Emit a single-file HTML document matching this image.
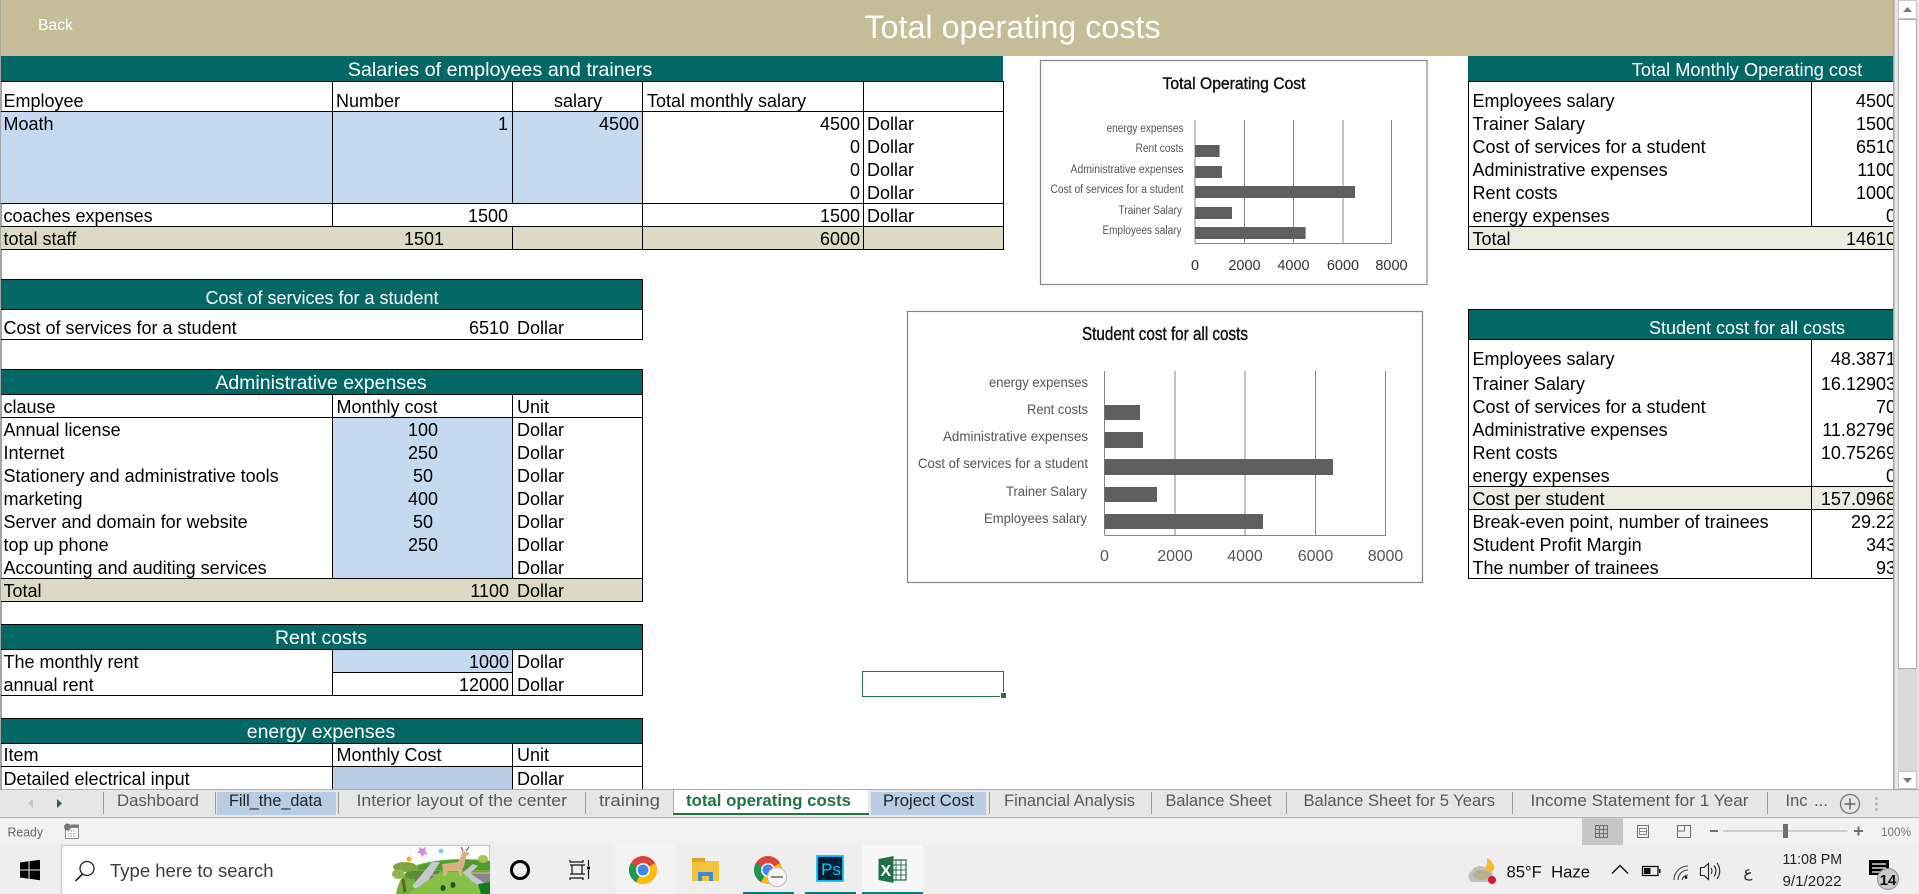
<!DOCTYPE html>
<html lang="en"><head><meta charset="utf-8"><title>Total operating costs</title>
<style>
html,body{margin:0;padding:0;width:1919px;height:894px;overflow:hidden;background:#fff}
body{position:relative;font-family:"Liberation Sans",Arial,sans-serif;color:#000}
#sheet{position:absolute;left:0;top:0;width:1893px;height:789px;overflow:hidden;background:#fff}
#sheet div{position:absolute}
.t{white-space:nowrap;font-size:18px;line-height:23px;height:23px}
.r{text-align:right}
.c{text-align:center;transform:translateX(-50%)}
.band{background:#036765}
.w{color:#fff}
.bl{background:#c5d9f1}
.tan{background:#ddd9c4}
.lt{background:#eeece1}
.h{height:1px;background:#000}
.v{width:1px;background:#000}
svg{position:absolute;left:0;top:0}
text{font-family:"Liberation Sans",Arial,sans-serif}
</style></head><body>
<div id="sheet">
<div style="left:0;top:0;width:1.5px;height:789px;background:#a6a6a6"></div>
<div style="left:1px;top:0;width:1892px;height:56px;background:#c4bd97"></div>
<div class="t w" style="left:38px;top:14px;font-size:15.7px">Back</div>
<div class="t w c" style="left:1012.5px;top:9px;font-size:32.3px;line-height:36px;height:36px">Total operating costs</div>

<!-- Salaries -->
<div class="band" style="left:1px;top:56px;width:1002px;height:25px"></div>
<div class="t w c" style="left:500px;top:59px;font-size:19.8px">Salaries of employees and trainers</div>
<div class="bl" style="left:1px;top:111px;width:641px;height:92px"></div>
<div class="tan" style="left:1px;top:226px;width:1002px;height:23px"></div>
<div class="h" style="left:1px;top:81px;width:1003px"></div>
<div class="h" style="left:1px;top:111px;width:1003px"></div>
<div class="h" style="left:1px;top:203px;width:1003px"></div>
<div class="h" style="left:1px;top:226px;width:1003px"></div>
<div class="h" style="left:1px;top:249px;width:1003px"></div>
<div class="v" style="left:1003px;top:81px;height:169px"></div>
<div class="v" style="left:332px;top:81px;height:145px"></div>
<div class="v" style="left:512px;top:81px;height:122px"></div>
<div class="v" style="left:512px;top:226px;height:23px"></div>
<div class="v" style="left:642px;top:81px;height:168px"></div>
<div class="v" style="left:863px;top:81px;height:168px"></div>
<div class="t" style="left:3.5px;top:90px">Employee</div>
<div class="t" style="left:336px;top:90px">Number</div>
<div class="t" style="left:554px;top:90px">salary</div>
<div class="t" style="left:647px;top:90px">Total monthly salary</div>
<div class="t" style="left:3.5px;top:113px">Moath</div>
<div class="t r" style="left:400px;width:108px;top:113px">1</div>
<div class="t r" style="left:530px;width:109px;top:113px">4500</div>
<div class="t r" style="left:750px;width:110px;top:113px">4500</div><div class="t" style="left:867px;top:113px">Dollar</div>
<div class="t r" style="left:750px;width:110px;top:136px">0</div><div class="t" style="left:867px;top:136px">Dollar</div>
<div class="t r" style="left:750px;width:110px;top:159px">0</div><div class="t" style="left:867px;top:159px">Dollar</div>
<div class="t r" style="left:750px;width:110px;top:182px">0</div><div class="t" style="left:867px;top:182px">Dollar</div>
<div class="t" style="left:3.5px;top:205px">coaches expenses</div>
<div class="t r" style="left:400px;width:108px;top:205px">1500</div>
<div class="t r" style="left:750px;width:110px;top:205px">1500</div><div class="t" style="left:867px;top:205px">Dollar</div>
<div class="t" style="left:3.5px;top:228px">total staff</div>
<div class="t" style="left:404px;top:228px">1501</div>
<div class="t r" style="left:750px;width:110px;top:228px">6000</div>

<!-- Cost of services -->
<div class="band" style="left:1px;top:279px;width:641px;height:30px"></div>
<div class="h" style="left:1px;top:279px;width:642px"></div>
<div class="t w c" style="left:322px;top:287px">Cost of services for a student</div>
<div class="h" style="left:1px;top:309px;width:642px"></div>
<div class="h" style="left:1px;top:339px;width:642px"></div>
<div class="v" style="left:642px;top:279px;height:61px"></div>
<div class="t" style="left:3.5px;top:317px">Cost of services for a student</div>
<div class="t r" style="left:400px;width:109px;top:317px">6510</div>
<div class="t" style="left:517px;top:317px">Dollar</div>

<!-- Administrative -->
<div class="band" style="left:1px;top:369px;width:641px;height:25px"></div>
<div class="h" style="left:1px;top:369px;width:642px"></div>
<div class="t w c" style="left:321px;top:372px;font-size:19.5px">Administrative expenses</div>
<div class="bl" style="left:333px;top:417px;width:179px;height:161px"></div>
<div class="tan" style="left:1px;top:578px;width:641px;height:23px"></div>
<div class="h" style="left:1px;top:394px;width:642px"></div>
<div class="h" style="left:1px;top:417px;width:642px"></div>
<div class="h" style="left:1px;top:578px;width:642px"></div>
<div class="h" style="left:1px;top:601px;width:642px"></div>
<div class="v" style="left:332px;top:394px;height:184px"></div>
<div class="v" style="left:512px;top:394px;height:184px"></div>
<div class="v" style="left:642px;top:369px;height:233px"></div>
<div class="t" style="left:3.5px;top:396px">clause</div><div class="t" style="left:336.5px;top:396px">Monthly cost</div><div class="t" style="left:517px;top:396px">Unit</div>
<div class="t" style="left:3.5px;top:419px">Annual license</div><div class="t c" style="left:423px;top:419px">100</div><div class="t" style="left:517px;top:419px">Dollar</div>
<div class="t" style="left:3.5px;top:442px">Internet</div><div class="t c" style="left:423px;top:442px">250</div><div class="t" style="left:517px;top:442px">Dollar</div>
<div class="t" style="left:3.5px;top:465px">Stationery and administrative tools</div><div class="t c" style="left:423px;top:465px">50</div><div class="t" style="left:517px;top:465px">Dollar</div>
<div class="t" style="left:3.5px;top:488px">marketing</div><div class="t c" style="left:423px;top:488px">400</div><div class="t" style="left:517px;top:488px">Dollar</div>
<div class="t" style="left:3.5px;top:511px">Server and domain for website</div><div class="t c" style="left:423px;top:511px">50</div><div class="t" style="left:517px;top:511px">Dollar</div>
<div class="t" style="left:3.5px;top:534px">top up phone</div><div class="t c" style="left:423px;top:534px">250</div><div class="t" style="left:517px;top:534px">Dollar</div>
<div class="t" style="left:3.5px;top:557px">Accounting and auditing services</div><div class="t" style="left:517px;top:557px">Dollar</div>
<div class="t" style="left:3.5px;top:580px">Total</div><div class="t r" style="left:400px;width:109px;top:580px">1100</div><div class="t" style="left:517px;top:580px">Dollar</div>

<!-- Rent -->
<div class="band" style="left:1px;top:624px;width:641px;height:25px"></div>
<div class="h" style="left:1px;top:624px;width:642px"></div>
<div class="t w c" style="left:321px;top:627px;font-size:19.5px">Rent costs</div>
<div class="bl" style="left:333px;top:649px;width:179px;height:23px"></div>
<div class="h" style="left:1px;top:649px;width:642px"></div>
<div class="h" style="left:332px;top:672px;width:180px"></div>
<div class="h" style="left:1px;top:695px;width:642px"></div>
<div class="v" style="left:332px;top:649px;height:46px"></div>
<div class="v" style="left:512px;top:649px;height:46px"></div>
<div class="v" style="left:642px;top:624px;height:72px"></div>
<div class="t" style="left:3.5px;top:651px">The monthly rent</div><div class="t r" style="left:400px;width:109px;top:651px">1000</div><div class="t" style="left:517px;top:651px">Dollar</div>
<div class="t" style="left:3.5px;top:674px">annual rent</div><div class="t r" style="left:400px;width:109px;top:674px">12000</div><div class="t" style="left:517px;top:674px">Dollar</div>

<!-- Energy -->
<div class="band" style="left:1px;top:718px;width:641px;height:25px"></div>
<div class="h" style="left:1px;top:718px;width:642px"></div>
<div class="t w c" style="left:321px;top:721px;font-size:19.5px">energy expenses</div>
<div class="h" style="left:1px;top:743px;width:642px"></div>
<div style="left:333px;top:767px;width:179px;height:22px;background:#b8cce4"></div>
<div class="h" style="left:1px;top:766px;width:642px"></div>
<div class="v" style="left:332px;top:743px;height:46px"></div>
<div class="v" style="left:512px;top:743px;height:46px"></div>
<div class="v" style="left:642px;top:718px;height:71px"></div>
<div class="t" style="left:3.5px;top:744px">Item</div><div class="t" style="left:336.5px;top:744px">Monthly Cost</div><div class="t" style="left:517px;top:744px">Unit</div>
<div class="t" style="left:3.5px;top:768px">Detailed electrical input</div><div class="t" style="left:517px;top:768px">Dollar</div>

<!-- Selection -->
<div style="left:862px;top:671px;width:140px;height:24px;border:1.5px solid #217346"></div>
<div style="left:1001px;top:693px;width:5px;height:5px;background:#217346;outline:1px solid #fff"></div>

<!-- Right table 1 -->
<div class="band" style="left:1468px;top:56px;width:425px;height:25px"></div>
<div class="t w c" style="left:1747px;top:59px;font-size:18.2px">Total Monthly Operating cost</div>
<div class="lt" style="left:1469px;top:226px;width:424px;height:23px"></div>
<div class="h" style="left:1468px;top:81px;width:425px"></div>
<div class="h" style="left:1468px;top:226px;width:425px"></div>
<div class="h" style="left:1468px;top:249px;width:425px"></div>
<div class="v" style="left:1468px;top:81px;height:169px"></div>
<div class="v" style="left:1811px;top:81px;height:145px"></div>
<div class="t" style="left:1472.5px;top:90px">Employees salary</div><div class="t r" style="left:1790px;width:106px;top:90px">4500</div>
<div class="t" style="left:1472.5px;top:113px">Trainer Salary</div><div class="t r" style="left:1790px;width:106px;top:113px">1500</div>
<div class="t" style="left:1472.5px;top:136px">Cost of services for a student</div><div class="t r" style="left:1790px;width:106px;top:136px">6510</div>
<div class="t" style="left:1472.5px;top:159px">Administrative expenses</div><div class="t r" style="left:1790px;width:106px;top:159px">1100</div>
<div class="t" style="left:1472.5px;top:182px">Rent costs</div><div class="t r" style="left:1790px;width:106px;top:182px">1000</div>
<div class="t" style="left:1472.5px;top:205px">energy expenses</div><div class="t r" style="left:1790px;width:106px;top:205px">0</div>
<div class="t" style="left:1472.5px;top:228px">Total</div><div class="t r" style="left:1790px;width:106px;top:228px">14610</div>

<!-- Right table 2 -->
<div class="band" style="left:1468px;top:309px;width:425px;height:30px"></div>
<div class="h" style="left:1468px;top:309px;width:425px"></div>
<div class="t w c" style="left:1747px;top:317px">Student cost for all costs</div>
<div class="lt" style="left:1469px;top:486px;width:424px;height:23px"></div>
<div class="h" style="left:1468px;top:339px;width:425px"></div>
<div class="h" style="left:1468px;top:486px;width:425px"></div>
<div class="h" style="left:1468px;top:509px;width:425px"></div>
<div class="h" style="left:1468px;top:578px;width:425px"></div>
<div class="v" style="left:1468px;top:309px;height:270px"></div>
<div class="v" style="left:1811px;top:339px;height:239px"></div>
<div class="t" style="left:1472.5px;top:348px">Employees salary</div><div class="t r" style="left:1790px;width:106px;top:348px">48.3871</div>
<div class="t" style="left:1472.5px;top:373px">Trainer Salary</div><div class="t r" style="left:1790px;width:106px;top:373px">16.12903</div>
<div class="t" style="left:1472.5px;top:396px">Cost of services for a student</div><div class="t r" style="left:1790px;width:106px;top:396px">70</div>
<div class="t" style="left:1472.5px;top:419px">Administrative expenses</div><div class="t r" style="left:1790px;width:106px;top:419px">11.82796</div>
<div class="t" style="left:1472.5px;top:442px">Rent costs</div><div class="t r" style="left:1790px;width:106px;top:442px">10.75269</div>
<div class="t" style="left:1472.5px;top:465px">energy expenses</div><div class="t r" style="left:1790px;width:106px;top:465px">0</div>
<div class="t" style="left:1472.5px;top:488px">Cost per student</div><div class="t r" style="left:1790px;width:106px;top:488px">157.0968</div>
<div class="t" style="left:1472.5px;top:511px">Break-even point, number of trainees</div><div class="t r" style="left:1790px;width:106px;top:511px">29.22</div>
<div class="t" style="left:1472.5px;top:534px">Student Profit Margin</div><div class="t r" style="left:1790px;width:106px;top:534px">343</div>
<div class="t" style="left:1472.5px;top:557px">The number of trainees</div><div class="t r" style="left:1790px;width:106px;top:557px">93</div>
</div>

<svg width="1919" height="894" viewBox="0 0 1919 894" xmlns="http://www.w3.org/2000/svg">
<!-- right edge + scrollbar -->
<rect x="1893" y="0" width="26" height="789" fill="#e6e6e6"/>
<rect x="1893" y="0" width="1.5" height="789" fill="#a6a6a6"/>
<rect x="1898" y="0" width="19" height="771" fill="#d9d9d9"/>
<rect x="1898.5" y="19.5" width="18" height="649" fill="#fff" stroke="#ababab"/>
<rect x="1898.5" y="0.5" width="18" height="18" fill="#fff" stroke="#c6c6c6"/>
<path d="M1903 12l4.500-5 4.500 5z" fill="#777"/>
<rect x="1898.5" y="771.500" width="18" height="17" fill="#fff" stroke="#c6c6c6"/>
<path d="M1903 778h9l-4.500 5z" fill="#777"/>

<!-- Chart 1 -->
<rect x="1040.500" y="60.500" width="386.500" height="224" fill="#fff" stroke="#868686" stroke-width="1.200"/>
<g stroke="#868686" stroke-width="1"><path d="M1195 120V243M1244.500 120V243M1293.500 120V243M1343 120V243M1391.500 120V243"/><path d="M1195 243.500H1392"/></g>
<g fill="#5f5f5f"><rect x="1195" y="145" width="24.600" height="12"/><rect x="1195" y="166" width="27" height="12"/><rect x="1195" y="186" width="160" height="12"/><rect x="1195" y="207" width="37" height="12"/><rect x="1195" y="227" width="110.600" height="12"/></g>
<text x="1162.500" y="89" font-size="17" fill="#111" stroke="#111" stroke-width=".4" textLength="143" lengthAdjust="spacingAndGlyphs">Total Operating Cost</text>
<g font-size="11.500" fill="#555">
<text x="1106.500" y="132" textLength="77" lengthAdjust="spacingAndGlyphs">energy expenses</text>
<text x="1135.500" y="152" textLength="48" lengthAdjust="spacingAndGlyphs">Rent costs</text>
<text x="1070.500" y="173" textLength="113" lengthAdjust="spacingAndGlyphs">Administrative expenses</text>
<text x="1050.500" y="193" textLength="133" lengthAdjust="spacingAndGlyphs">Cost of services for a student</text>
<text x="1118.500" y="214" textLength="63.500" lengthAdjust="spacingAndGlyphs">Trainer Salary</text>
<text x="1102.500" y="234" textLength="79" lengthAdjust="spacingAndGlyphs">Employees salary</text>
</g>
<g font-size="14.500" fill="#333" text-anchor="middle"><text x="1195" y="270">0</text><text x="1244.500" y="270">2000</text><text x="1293.500" y="270">4000</text><text x="1343" y="270">6000</text><text x="1391.500" y="270">8000</text></g>

<!-- Chart 2 -->
<rect x="907.500" y="311.500" width="515" height="271" fill="#fff" stroke="#868686" stroke-width="1.200"/>
<g stroke="#868686" stroke-width="1"><path d="M1104.500 371V535M1175 371V535M1245 371V535M1315.500 371V535M1385.500 371V535"/><path d="M1104.500 535.500H1386"/></g>
<g fill="#5f5f5f"><rect x="1104.500" y="405" width="35.500" height="15"/><rect x="1104.500" y="432" width="38.500" height="16"/><rect x="1104.500" y="459" width="228.500" height="16"/><rect x="1104.500" y="487" width="52.500" height="15"/><rect x="1104.500" y="514" width="158.500" height="15"/></g>
<text x="1082" y="340" font-size="18" fill="#111" stroke="#111" stroke-width=".4" textLength="166" lengthAdjust="spacingAndGlyphs">Student cost for all costs</text>
<g font-size="14" fill="#555">
<text x="989" y="387" textLength="99" lengthAdjust="spacingAndGlyphs">energy expenses</text>
<text x="1027" y="414" textLength="61" lengthAdjust="spacingAndGlyphs">Rent costs</text>
<text x="943" y="441" textLength="145" lengthAdjust="spacingAndGlyphs">Administrative expenses</text>
<text x="918" y="468" textLength="170" lengthAdjust="spacingAndGlyphs">Cost of services for a student</text>
<text x="1006" y="496" textLength="81" lengthAdjust="spacingAndGlyphs">Trainer Salary</text>
<text x="984" y="523" textLength="103" lengthAdjust="spacingAndGlyphs">Employees salary</text>
</g>
<g font-size="16" fill="#555" text-anchor="middle"><text x="1104.500" y="561">0</text><text x="1175" y="561">2000</text><text x="1245" y="561">4000</text><text x="1315.500" y="561">6000</text><text x="1385.500" y="561">8000</text></g>

<!-- Tab bar -->
<rect x="0" y="789" width="1919" height="29" fill="#e6e6e6"/>
<rect x="0" y="789" width="1919" height="1" fill="#ababab"/>
<rect x="0" y="817" width="1919" height="1.200" fill="#b5b5b5"/>
<path d="M33 799v9l-5-4.500z" fill="#c4c4c4"/><path d="M57 799v9l5-4.500z" fill="#1e6b41"/>
<g stroke="#9b9b9b" stroke-width="1"><path d="M103.500 792V814M215.500 792V814M338.500 792V814M585.500 792V814M989.500 792V814M1151.500 792V814M1286.500 792V814M1512.500 792V814M1767.500 792V814"/></g>
<rect x="217" y="792" width="119" height="23" fill="#b8cce4"/>
<rect x="871" y="792" width="115" height="23" fill="#b8cce4"/>
<path d="M673.500 814V789.500H868.500" fill="#fff" stroke="#ababab"/>
<rect x="674" y="790" width="194" height="23" fill="#fff"/>
<rect x="673" y="813" width="196" height="2" fill="#217346"/>
<g font-size="17" fill="#595959">
<text x="117" y="806" textLength="82" lengthAdjust="spacingAndGlyphs">Dashboard</text>
<text x="229" y="806" textLength="93" lengthAdjust="spacingAndGlyphs" fill="#222">Fill_the_data</text>
<text x="356.500" y="806" textLength="210.500" lengthAdjust="spacingAndGlyphs">Interior layout of the center</text>
<text x="599" y="806" textLength="61" lengthAdjust="spacingAndGlyphs">training</text>
<text x="686" y="806" textLength="165" lengthAdjust="spacingAndGlyphs" fill="#217346" font-weight="bold">total operating costs</text>
<text x="883" y="806" textLength="91" lengthAdjust="spacingAndGlyphs" fill="#222">Project Cost</text>
<text x="1004" y="806" textLength="131" lengthAdjust="spacingAndGlyphs">Financial Analysis</text>
<text x="1165.500" y="806" textLength="106" lengthAdjust="spacingAndGlyphs">Balance Sheet</text>
<text x="1303.500" y="806" textLength="191.500" lengthAdjust="spacingAndGlyphs">Balance Sheet for 5 Years</text>
<text x="1530.500" y="806" textLength="218" lengthAdjust="spacingAndGlyphs">Income Statement for 1 Year</text>
<text x="1785.500" y="806" textLength="22" lengthAdjust="spacingAndGlyphs">Inc</text>
<text x="1814" y="806" fill="#217346" textLength="14" lengthAdjust="spacingAndGlyphs">...</text>
</g>
<circle cx="1850" cy="804" r="9.500" fill="none" stroke="#777" stroke-width="1.300"/><path d="M1850 798.500v11M1844.500 804h11" stroke="#666" stroke-width="1.500"/>
<g fill="#bdbdbd"><rect x="1875" y="797" width="3" height="3"/><rect x="1875" y="802.500" width="3" height="3"/><rect x="1875" y="808" width="3" height="3"/></g>

<!-- Status bar -->
<rect x="0" y="818.200" width="1919" height="27" fill="#f1f1f1"/>
<text x="7.500" y="836.500" font-size="13" fill="#666" textLength="35.500" lengthAdjust="spacingAndGlyphs">Ready</text>
<rect x="65.500" y="827.500" width="13" height="11" fill="#fff" stroke="#8a8a8a"/><circle cx="67.500" cy="827" r="3.500" fill="#777"/><rect x="71" y="824.500" width="8" height="3" fill="#777"/><path d="M68 831h8M68 833.500h8M68 836h8" stroke="#999" stroke-dasharray="1.500 1"/>
<rect x="1582" y="818.200" width="41" height="27" fill="#c6c6c6"/>
<path d="M1595.500 825.500h12v12h-12zM1595.500 829.500h12M1595.500 833.500h12M1599.500 825.500v12M1603.500 825.500v12" fill="none" stroke="#6f6f6f"/>
<path d="M1637.500 825.500h11v12h-11z" fill="none" stroke="#6f6f6f"/><path d="M1639.500 828.500h7v6h-7zM1640 831.500h6" fill="none" stroke="#8a8a8a"/>
<path d="M1677.500 825.500h13v12h-13zM1684.500 825.500v5.500h-7" fill="none" stroke="#6f6f6f"/>
<rect x="1710" y="830" width="8" height="2" fill="#6f6f6f"/>
<rect x="1723" y="830.500" width="124.500" height="1" fill="#aaa"/>
<rect x="1783" y="824" width="5" height="14" fill="#6f6f6f"/>
<path d="M1854 831h9M1858.500 826.500v9" stroke="#6f6f6f" stroke-width="2"/>
<text x="1881" y="836" font-size="12" fill="#777" textLength="30" lengthAdjust="spacingAndGlyphs">100%</text>

<!-- Taskbar -->
<rect x="0" y="845" width="1919" height="49" fill="#eeeeee"/>
<g fill="#000"><path d="M20 862.500l8.500-1.200v8.200H20zM29.500 861.200L40 859.700v9.800H29.500zM20 870.500h8.500v8.300L20 877.500zM29.500 870.500H40v9.800l-10.500-1.500z"/></g>
<rect x="61" y="845" width="429" height="49" fill="#fff"/>
<path d="M61.500 894V845.500H489.500V894" fill="none" stroke="#c9c9c9" stroke-width="1.200"/>
<circle cx="87" cy="868.500" r="7" fill="none" stroke="#222" stroke-width="1.300"/><path d="M82.500 874L75.500 881" stroke="#222" stroke-width="1.600"/>
<text x="110" y="877" font-size="18.500" fill="#3c3c3c" textLength="163.500" lengthAdjust="spacingAndGlyphs">Type here to search</text>

<!-- search illustration -->
<path d="M396 894Q400 870 420 864Q450 856 490 861V894Z" fill="#6fb33a"/>
<path d="M418 866Q450 856 490 861V870H418Z" fill="#4f9d2c"/>
<path d="M415 871H440V884H415Z" fill="#6d6f77"/>
<path d="M462 871H490V885H462Z" fill="#85878f"/>
<path d="M415 875H440M466 873H490" stroke="#d9c66f" stroke-width="1"/>
<path d="M432 862L440 862 421 892 412 886Z" fill="#c5c9cc"/>
<path d="M473 864L478 866 470 873 490 887V894L461 874Z" fill="#c2c6ca"/>
<path d="M440 872H462L486 894H408Z" fill="#86c147"/>
<path d="M478 884L490 882V894H481Z" fill="#137c1d"/>
<path d="M405 892L403 879" stroke="#6e5a2c" stroke-width="3" fill="none"/>
<ellipse cx="405" cy="867" rx="12" ry="5" fill="#7fa53c"/><ellipse cx="413" cy="875" rx="8" ry="4" fill="#5f8d38"/><ellipse cx="398" cy="874" rx="6" ry="5" fill="#94b64e"/>
<path d="M442 864L458 862 461 856 463 851 470 853 466 857 464 866 462 870 462 876 460 876 458 871 448 871 446 876 443 876 443 870Z" fill="#dcae85"/>
<path d="M463 851l-2-4M466 851l3-4" stroke="#7a5a3c" stroke-width="1.200"/>
<circle cx="409" cy="859" r="2.500" fill="#f9a825"/><path d="M419 847l3 2 4-2-1 4 3 3-4 .5-2 3-1.500-4-4-1 3-2z" fill="#d685f0"/><circle cx="441" cy="851" r="2.300" fill="#5fd3e6"/>
<ellipse cx="483" cy="859" rx="5" ry="4" fill="#a8c455"/>
<ellipse cx="443" cy="888" rx="2.500" ry="3" fill="#2f4a2a"/><ellipse cx="453" cy="885" rx="2.500" ry="3" fill="#2f4a2a"/>

<circle cx="520" cy="870" r="8.500" fill="none" stroke="#000" stroke-width="3"/>
<path d="M570 860v2h13v-2M572 865h10v9h-10zM570 865h15M570 874h15M570 880v-2h13v2M588.500 860v6M588.500 870v9" fill="none" stroke="#111" stroke-width="1.200"/><rect x="587" y="866.500" width="3" height="3" fill="#111"/>

<rect x="614" y="845" width="61" height="49" fill="#f3f3f3"/>
<rect x="862" y="845" width="61" height="49" fill="#f7f7f7"/>
<rect x="743" y="892" width="51" height="2" fill="#008080"/><rect x="805" y="892" width="51" height="2" fill="#008080"/><rect x="862" y="892" width="61" height="2" fill="#008080"/>

<!-- Chrome -->
<circle cx="643" cy="870" r="14" fill="#db4437"/>
<path d="M643 870L655.100 863 A14 14 0 0 1 636 882.100Z" fill="#fbbc05"/>
<path d="M643 870L636 882.100A14 14 0 0 1 630.900 863Z" fill="#1e9a50"/>
<circle cx="643" cy="870" r="7" fill="#fff"/><circle cx="643" cy="870" r="5.500" fill="#4285f4"/>

<!-- Explorer -->
<path d="M692 860q0-2 2-2h9l2 3h14v20h-27z" fill="#f5c33b"/><rect x="692" y="858" width="13" height="4" fill="#dfa328"/>
<path d="M698 881v-9h15v9h-4v-5h-7v5z" fill="#3d8dd6"/>

<!-- Chrome profile -->
<circle cx="768" cy="870" r="14" fill="#db4437"/>
<path d="M768 870L780.100 863 A14 14 0 0 1 761 882.100Z" fill="#fbbc05"/>
<path d="M768 870L761 882.100A14 14 0 0 1 755.900 863Z" fill="#1e9a50"/>
<circle cx="768" cy="870" r="7" fill="#fff"/><circle cx="768" cy="870" r="5.500" fill="#4285f4"/>
<circle cx="777" cy="877" r="9.500" fill="#f4f4f4" stroke="#bdbdbd"/>
<rect x="771" y="876" width="12" height="2" fill="#8a8a8a"/>

<!-- Photoshop -->
<rect x="817" y="856" width="26" height="25" fill="#001d34" stroke="#00c8ff" stroke-width="1.800"/>
<text x="821" y="875" font-size="17" fill="#00c8ff">Ps</text>

<!-- Excel -->
<path d="M891 860h15v20h-15z" fill="#fff" stroke="#1e7145" stroke-width="1.200"/>
<path d="M896 860v20M901 860v20M891 865h15M891 870h15M891 875h15" stroke="#1e7145" stroke-width="1"/>
<path d="M878.500 859l15-3v27l-15-3z" fill="#1e7145"/>
<text x="880.500" y="876" font-size="16" fill="#fff" font-weight="bold">X</text>

<!-- Tray -->
<path d="M1487 858q6 3 7 8t-3 6l-8-2q5-5 4-12z" fill="#f7bd2e"/>
<path d="M1469 879q-2-6 3-8 2-5 8-5 5 0 7 4 6 1 6 6t-5 6h-15q-3 0-4-3z" fill="#b9c2c4"/>
<ellipse cx="1482" cy="875" rx="9" ry="5" fill="#b6b188"/>
<circle cx="1492" cy="880" r="4" fill="#e0143c"/>
<text x="1506.500" y="877.500" font-size="17" fill="#111" textLength="83.500" lengthAdjust="spacingAndGlyphs" xml:space="preserve">85°F  Haze</text>
<path d="M1612 873.500L1620 865.500 1628 873.500" fill="none" stroke="#111" stroke-width="1.400"/>
<rect x="1642.500" y="866.500" width="15.500" height="9" fill="none" stroke="#111" stroke-width="1.300"/><rect x="1644" y="868" width="6.500" height="6" fill="#111"/><rect x="1659" y="869" width="1.500" height="4" fill="#111"/>
<g fill="none" stroke="#444" stroke-width="1.100"><path d="M1674 880a14 14 0 0 1 14-14"/><path d="M1678 880a10 10 0 0 1 10-10"/><path d="M1682 880a6 6 0 0 1 6-5"/></g><circle cx="1686" cy="877.500" r="1.400" fill="#111"/>
<path d="M1700.500 867.500h3.500l4.500-4v16l-4.500-4h-3.500z" fill="none" stroke="#222" stroke-width="1.100"/>
<g fill="none" stroke="#222" stroke-width="1.100"><path d="M1711 868q2 3 0 6"/><path d="M1714 865.500q4 5.500 0 11"/><path d="M1717 863q5.500 8 0 16"/></g>
<text x="1743.500" y="877" font-size="15" fill="#222" font-family="'DejaVu Sans',sans-serif">ع</text>
<text x="1782.500" y="864" font-size="15" fill="#222" textLength="59.500" lengthAdjust="spacingAndGlyphs">11:08 PM</text>
<text x="1782.500" y="886" font-size="15" fill="#222" textLength="59" lengthAdjust="spacingAndGlyphs">9/1/2022</text>
<path d="M1869 860h20v15h-6l-4 3v-3h-10z" fill="#000"/><path d="M1872 864h14M1872 868h14M1872 872h14" stroke="#fff" stroke-width="1.200"/>
<circle cx="1888" cy="879" r="10.500" fill="#c9c9c9" stroke="#8a8a8a"/>
<text x="1888" y="885" font-size="15" fill="#111" text-anchor="middle" font-weight="bold">14</text>
</svg>
</body></html>
